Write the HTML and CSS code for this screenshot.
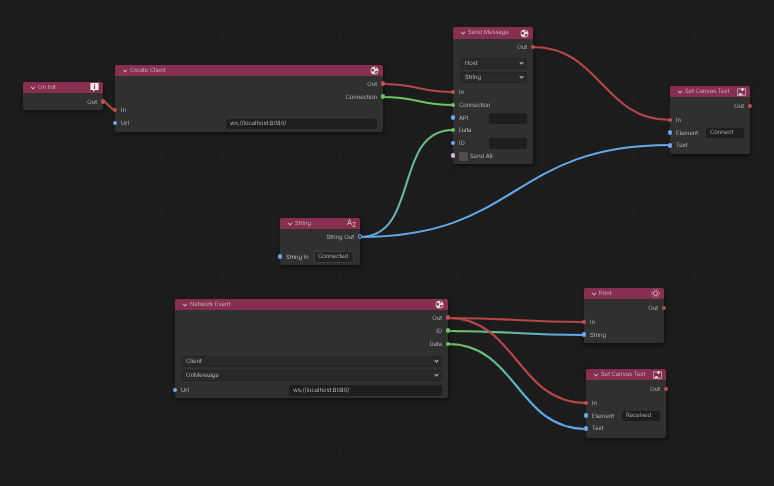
FILE: index.html
```html
<!DOCTYPE html>
<html lang="en">
<head>
<meta charset="utf-8">
<title>Node editor</title>
<link rel="stylesheet" href="styles.css">
</head>
<body>
<main class="canvas">
  <section class="node n-init">
    <header class="head"><span class="chev"></span><span class="title">On Init</span>
      <svg class="icon" viewBox="0 0 10 10"><path d="M.5 0h9v7.800H5.500L3.500 10V7.800H.5z" fill="#f0f0f0"/><path d="M4.300 1.200h1.400v1.300H4.300zM4.300 3.300h1.400v3.400H4.300z" fill="#84304f"/></svg>
    </header>
    <div class="body">
      <div class="row right">Out<i class="sock out red"></i></div>
    </div>
  </section>

  <section class="node n-client">
    <header class="head"><span class="chev"></span><span class="title">Create Client</span>
      <svg class="icon" viewBox="0 0 10 10"><use href="#globe"/></svg>
    </header>
    <div class="body">
      <div class="row right">Out<i class="sock out red"></i></div>
      <div class="row right">Connection<i class="sock out green"></i></div>
      <div class="row"><i class="sock in red"></i>In</div>
      <div class="row"><i class="sock in blue"></i><span class="lbl">Url</span><span class="field wide">ws://localhost:8080/</span></div>
    </div>
  </section>

  <section class="node n-send">
    <header class="head tall"><span class="chev"></span><span class="title">Send Message</span>
      <svg class="icon" viewBox="0 0 10 10"><use href="#globe"/></svg>
    </header>
    <div class="body">
      <div class="row right">Out<i class="sock out red"></i></div>
      <div class="gap"></div>
      <div class="select">Host<span class="caret"></span></div>
      <div class="select">String<span class="caret"></span></div>
      <div class="row"><i class="sock in red"></i>In</div>
      <div class="row"><i class="sock in green"></i>Connection</div>
      <div class="row"><i class="sock in blue"></i><span class="lbl">API</span><span class="field short"></span></div>
      <div class="row"><i class="sock in green"></i>Data</div>
      <div class="row"><i class="sock in blue"></i><span class="lbl">ID</span><span class="field short"></span></div>
      <div class="row"><i class="sock in pale"></i><span class="check"></span>Send All</div>
    </div>
  </section>

  <section class="node n-canvas1 compact">
    <header class="head"><span class="chev"></span><span class="title">Set Canvas Text</span>
      <svg class="icon" viewBox="0 0 10 10"><use href="#canvas"/></svg>
    </header>
    <div class="body">
      <div class="row right first">Out<i class="sock out red"></i></div>
      <div class="row first"><i class="sock in red"></i>In</div>
      <div class="row"><i class="sock in blue"></i><span class="lbl">Element</span><span class="field mid">Connect</span></div>
      <div class="row"><i class="sock in blue"></i>Text</div>
    </div>
  </section>

  <section class="node n-string">
    <header class="head"><span class="chev"></span><span class="title">String</span><span class="az">A<sub>Z</sub></span></header>
    <div class="body">
      <div class="row right">String Out<i class="sock out hollow"></i></div>
      <div class="row str-in"><i class="sock in blue"></i><span class="lbl">String In</span><span class="field boxed">Connected</span></div>
    </div>
  </section>

  <section class="node n-event">
    <header class="head"><span class="chev"></span><span class="title">Network Event</span>
      <svg class="icon" viewBox="0 0 10 10"><use href="#globe"/></svg>
    </header>
    <div class="body">
      <div class="row right">Out<i class="sock out red"></i></div>
      <div class="row right">ID<i class="sock out green"></i></div>
      <div class="row right">Data<i class="sock out green"></i></div>
      <div class="gap"></div>
      <div class="select">Client<span class="caret"></span></div>
      <div class="select">OnMessage<span class="caret"></span></div>
      <div class="row"><i class="sock in blue"></i><span class="lbl">Url</span><span class="field event-url">ws://localhost:8080/</span></div>
    </div>
  </section>

  <section class="node n-print compact">
    <header class="head"><span class="chev"></span><span class="title">Print</span>
      <svg class="icon" viewBox="0 0 10 10" fill="none" stroke="#e8e8e8" stroke-width=".8"><circle cx="5" cy="5" r="2.300"/><circle cx="5" cy="5" r="4.200" stroke-dasharray="1.100 1.100"/></svg>
    </header>
    <div class="body">
      <div class="row right first">Out<i class="sock out red"></i></div>
      <div class="row first"><i class="sock in red"></i>In</div>
      <div class="row"><i class="sock in blue"></i>String</div>
    </div>
  </section>

  <section class="node n-canvas2 compact">
    <header class="head"><span class="chev"></span><span class="title">Set Canvas Text</span>
      <svg class="icon" viewBox="0 0 10 10"><use href="#canvas"/></svg>
    </header>
    <div class="body">
      <div class="row right first">Out<i class="sock out red"></i></div>
      <div class="row first"><i class="sock in red"></i>In</div>
      <div class="row"><i class="sock in blue"></i><span class="lbl">Element</span><span class="field mid">Received</span></div>
      <div class="row"><i class="sock in blue"></i>Text</div>
    </div>
  </section>

  <svg class="wires" viewBox="0 0 774 486" width="774" height="486">
    <defs>
      <linearGradient id="gb1" gradientUnits="userSpaceOnUse" x1="448" y1="0" x2="585" y2="0"><stop offset=".1" stop-color="#6cc462"/><stop offset=".9" stop-color="#5fa8f0"/></linearGradient>
      <linearGradient id="gb2" gradientUnits="userSpaceOnUse" x1="360" y1="0" x2="452" y2="0"><stop offset="0" stop-color="#64a8e8"/><stop offset="1" stop-color="#6cc462"/></linearGradient>
      <linearGradient id="gb3" gradientUnits="userSpaceOnUse" x1="448" y1="0" x2="585" y2="0"><stop offset=".1" stop-color="#6cc462"/><stop offset=".7" stop-color="#5fa8f0"/></linearGradient>
      <g id="globe">
        <circle cx="5" cy="5" r="4.300" fill="#dcdcdc"/>
        <path d="M2 2.800 4.600 3.800 3.600 6.600 1.300 5.200zM6 1 7.800 2.200 6.500 3.600 5.500 2.400zM6 5.500 8.800 5.500 7 8.400 5.400 8z" fill="#84304f"/>
      </g>
      <g id="canvas">
        <path d="M.5 2h9v7.500h-9z" fill="none" stroke="#dcdcdc" stroke-width=".7"/>
        <path d="M1.500 8.800 3 6.600 6 7.400V8.800zM5.500.8 8 2.200 6.300 4.800 4.500 3.700z" fill="#e4e4e4"/>
      </g>
    </defs>
    <g fill="none" stroke-width="2.100" stroke-linecap="round">
      <path d="M103 100C105 102 112 109 115 111" stroke="#b5474a"/>
      <path d="M383 84C418 84 418 92 453 92" stroke="#b5474a"/>
      <path d="M383 97C418 97 418 105 453 105" stroke="#6cc462"/>
      <path d="M533 47C600 47 603 120 670 120" stroke="#b5474a"/>
      <path d="M360 237C420 237 393 130 453 130" stroke="url(#gb2)"/>
      <path d="M360 237C520 237 510 145 670 145" stroke="#64a8ee"/>
      <path d="M448 318C516 318 516 322 584 322" stroke="#b5474a"/>
      <path d="M448 331C516 331 516 335 584 335" stroke="url(#gb1)"/>
      <path d="M448 318C517 318 517 403 586 403" stroke="#b5474a"/>
      <path d="M448 344C517 344 517 429 586 429" stroke="url(#gb3)"/>
    </g>
  </svg>
</main>
</body>
</html>
```
FILE: styles.css
```css
* { box-sizing: border-box; }
html, body { margin: 0; height: 100%; }
body { background: #1c1c1c; overflow: hidden; }

.canvas {
  position: relative;
  width: 774px;
  height: 486px;
  background-color: #1c1c1c;
  background-image: radial-gradient(circle at center, #292929 0, #212121 1px, transparent 2px);
  background-size: 59px 59px;
  background-position: 15.5px 8.5px;
  font: 300 5.900px/13px "Inter", "Liberation Sans", sans-serif;
  text-rendering: geometricPrecision;
  color: #d4d4d4;
  overflow: hidden;
}

.wires { position: absolute; left: 0; top: 0; z-index: 1; pointer-events: none; }

.node {
  position: absolute;
  z-index: 2;
  background: #303030;
  border-radius: 2px;
  box-shadow: 1px 2px 4px rgba(0, 0, 0, .5);
  will-change: transform;
}

.n-init    { left: 23px;  top: 82px;  width: 80px;  height: 28px; }
.n-client  { left: 115px; top: 65px;  width: 268px; height: 67px; }
.n-send    { left: 453px; top: 27px;  width: 80px;  height: 137px; }
.n-canvas1 { left: 670px; top: 86px;  width: 80px;  height: 68px; }
.n-string  { left: 280px; top: 218px; width: 80px;  height: 47px; }
.n-event   { left: 175px; top: 299px; width: 273px; height: 99px; }
.n-print   { left: 584px; top: 288px; width: 80px;  height: 55px; }
.n-canvas2 { left: 586px; top: 369px; width: 80px;  height: 69px; }

.head {
  display: flex;
  align-items: center;
  height: 11px;
  padding: 0 4px 0 8px;
  background: #872f50;
  border-radius: 2px 2px 0 0;
  color: #dccdd3;
}
.head.tall { height: 12px; }
.title { flex: 1; margin-left: 3px; margin-top: -1px; white-space: nowrap; }
.chev {
  width: 4px;
  height: 4px;
  margin-top: -2px;
  border-right: 1px solid #d0bec5;
  border-bottom: 1px solid #d0bec5;
  transform: rotate(45deg) scale(.85);
}
.icon { width: 9px; height: 9px; flex: none; }
.az { font-size: 7.500px; line-height: 8px; color: #e8e8e8; margin-top: -2px; }
.az sub { font-size: 6.500px; line-height: 0; vertical-align: -2px; }

.body { padding: 1px 6px 0; }
.n-send .body { padding-top: 1.600px; }

.row {
  position: relative;
  display: flex;
  align-items: center;
  height: 13.200px;
  padding-top: 1px;
  white-space: nowrap;
}
.n-send .row { height: 12.700px; }
.compact .row { height: 12.700px; }
.row.right { justify-content: flex-end; }
.row.first { margin-top: 1.500px; }
.n-init .row { margin-top: 1px; }
.row.str-in { margin-top: 7px; }
.lbl { flex: 1; }

.sock {
  position: absolute;
  width: 4.600px;
  height: 4.600px;
  top: 50%;
  margin-top: -2.300px;
  border-radius: 50%;
  z-index: 3;
}
.sock.in  { left: -8.300px; }
.sock.out { right: -8.300px; }
.red { background: #c25050; }
.green { background: #6cc462; }
.blue { background: #6fa8e6; }
.pale { background: #d9b8d0; }
.hollow { background: #262626; border: 1px solid #6fa8e6; }

.field {
  display: block;
  height: 10px;
  line-height: 10px;
  padding: 0 4px;
  background: #1e1e1e;
  border-radius: 2px;
}
.field.wide { width: 151px; }
.field.short { width: 38px; height: 11px; }
.field.mid { width: 38px; }
.field.event-url { width: 153px; height: 11px; line-height: 11px; }
.field.boxed { width: 40px; height: 12px; line-height: 10px; border: 1px solid #3c3c3c; background: #222; padding: 0 3px; }

.gap { height: 5px; }
.n-send .gap { height: 4.500px; }
.select {
  display: flex;
  align-items: center;
  justify-content: space-between;
  height: 11px;
  margin: 0 0 3px;
  padding: 0 3px 0 4px;
  background: #292929;
  border: 1px solid #232323;
  border-radius: 2px;
}
.n-send .select { margin-left: 1px; }
.caret {
  width: 3px;
  height: 3px;
  margin-top: -1px;
  border-right: 1px solid #ccc;
  border-bottom: 1px solid #ccc;
  transform: rotate(45deg);
}
.check {
  width: 9px;
  height: 9px;
  margin-right: 2px;
  background: #4f4f4f;
  border-radius: 2px;
}
```
